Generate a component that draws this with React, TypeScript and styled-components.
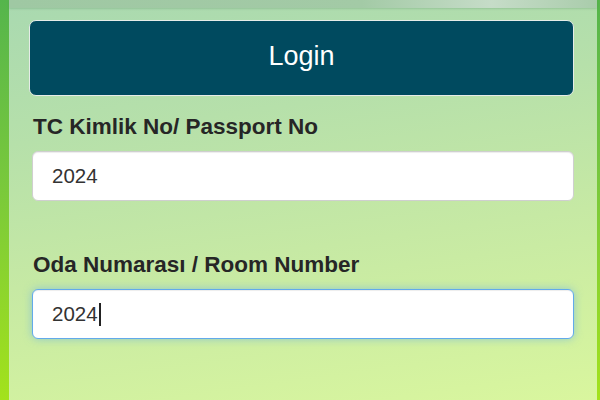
import React from "react";
import styled, { createGlobalStyle } from "styled-components";

const Global = createGlobalStyle`
  html, body { margin: 0; padding: 0; }
  body { width: 600px; height: 400px; overflow: hidden; font-family: "Liberation Sans", Arial, sans-serif; }
  #root { width: 600px; height: 400px; }
`;

const Page = styled.div`
  width: 600px;
  height: 400px;
  display: flex;
  padding: 0 3px 0 9px;
  box-sizing: border-box;
  background: linear-gradient(180deg, #55b54c 0%, #78c83c 45%, #a3e21c 100%);
`;

const Panel = styled.div`
  flex: 1;
  display: flex;
  flex-direction: column;
  background: linear-gradient(172deg, #a9d9b0 0%, #b6e0aa 30%, #c6e9a4 60%, #d9f69e 100%);
`;

const TopBar = styled.div`
  height: 8px;
  background: linear-gradient(90deg, #9fc8a3 0%, #a3caa6 60%, #c6dcc8 82%, #a9ccab 100%);
  box-shadow: 0 1px 2px rgba(80, 130, 90, 0.25);
`;

const Content = styled.div`
  display: flex;
  flex-direction: column;
  padding: 12px 23px 0 20px;
`;

const LoginButton = styled.button`
  height: 76px;
  border: 1px solid #e6ece8;
  border-radius: 7px;
  background: #004a5f;
  color: #ffffff;
  font-family: "Liberation Sans", Arial, sans-serif;
  font-size: 27px;
  padding: 0 0 3px 0;
  cursor: pointer;
`;

const Group = styled.div<{ $top: number; $gap: number }>`
  display: flex;
  flex-direction: column;
  margin-top: ${(p) => p.$top}px;
  padding-left: 3px;
  label { margin-bottom: ${(p) => p.$gap}px; }
`;

const Label = styled.label`
  font-family: "Liberation Sans", Arial, sans-serif;
  font-weight: bold;
  font-size: 22.5px;
  line-height: 26px;
  color: #262626;
  padding-left: 1px;
`;

const InputBox = styled.div<{ $focused?: boolean }>`
  height: 50px;
  box-sizing: border-box;
  display: flex;
  align-items: center;
  padding: 0 19px;
  background: #ffffff;
  border-radius: 6px;
  border: 1px solid ${(p) => (p.$focused ? "#62aaeb" : "#cfcfcf")};
  box-shadow: ${(p) =>
    p.$focused
      ? "inset 0 1px 1px rgba(0,0,0,0.075), 0 0 8px rgba(102,175,233,0.6)"
      : "inset 0 1px 1px rgba(0,0,0,0.075)"};
  font-family: "Liberation Sans", Arial, sans-serif;
  font-size: 20.5px;
  color: #333333;
`;

const Caret = styled.span`
  display: inline-block;
  width: 2px;
  height: 23px;
  background: #222;
  margin-left: 1px;
`;

export default function App() {
  return (
    <>
      <Global />
      <Page>
        <Panel>
          <TopBar />
          <Content>
            <LoginButton>Login</LoginButton>
            <Group $top={18} $gap={11}>
              <Label>TC Kimlik No/ Passport No</Label>
              <InputBox>2024</InputBox>
            </Group>
            <Group $top={51} $gap={11}>
              <Label>Oda Numarası / Room Number</Label>
              <InputBox $focused>
                <span>2024</span>
                <Caret />
              </InputBox>
            </Group>
          </Content>
        </Panel>
      </Page>
    </>
  );
}
